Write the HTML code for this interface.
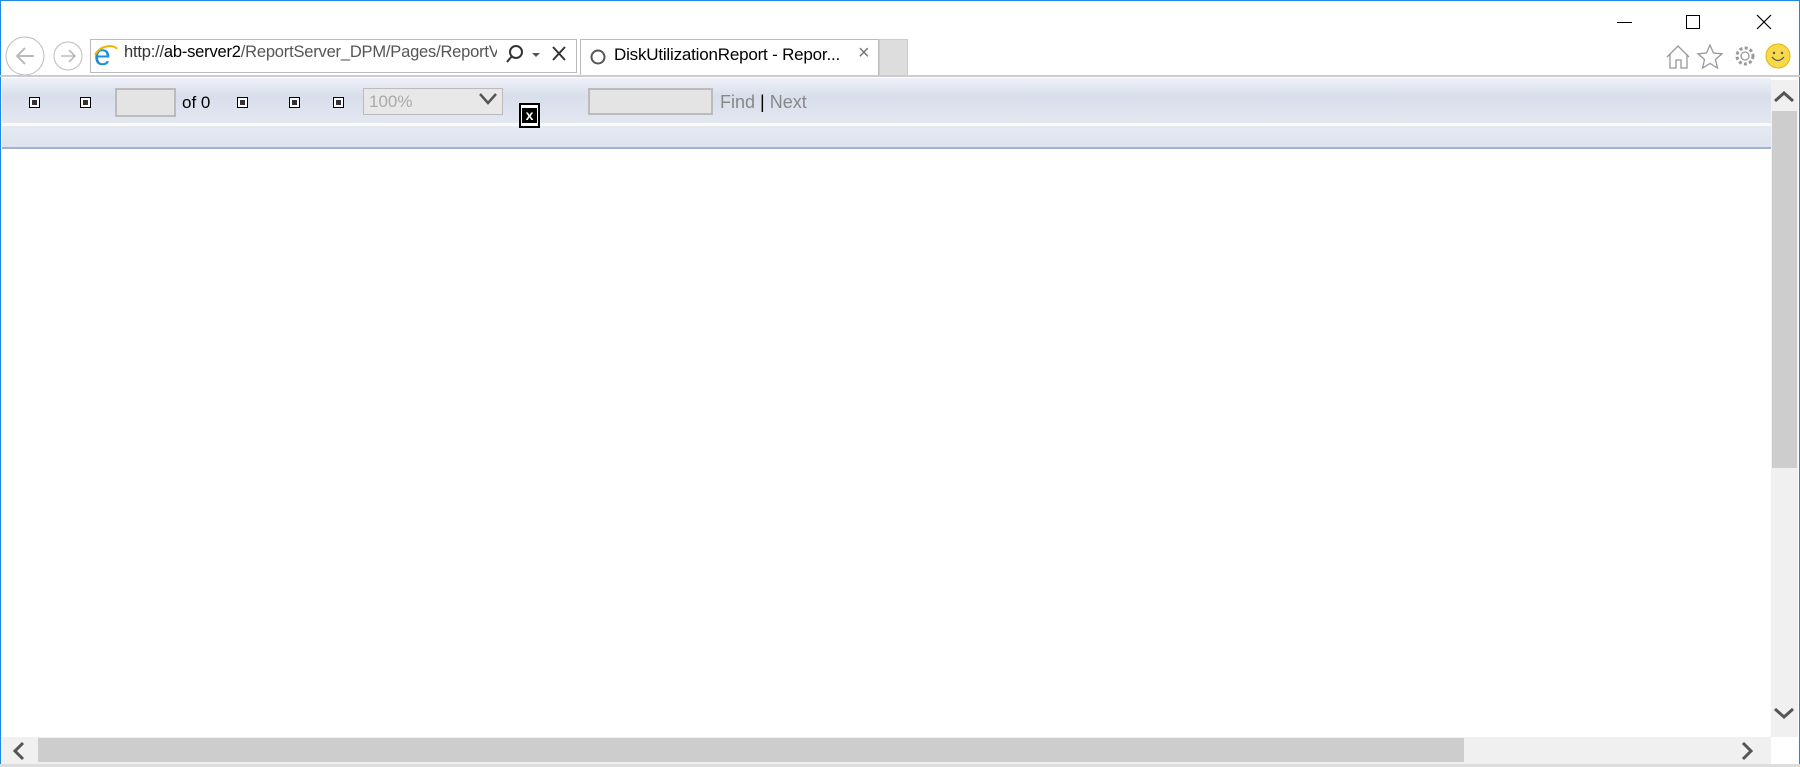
<!DOCTYPE html>
<html><head><meta charset="utf-8"><style>
*{margin:0;padding:0;box-sizing:border-box}
body{width:1800px;height:767px;overflow:hidden;background:#fff;font-family:"Segoe UI","Liberation Sans",sans-serif;position:relative}
.a{position:absolute}
.ic{position:absolute;width:11px;height:11px;border:1px solid #000;background:#fff;top:97px}
.ic:after{content:"";position:absolute;left:2px;top:2px;width:5px;height:5px;background:#333}
</style></head><body>
<div class="a" style="left:0;top:0;width:1800px;height:1px;background:#1e88e5"></div>
<div class="a" style="left:0;top:0;width:1px;height:767px;background:#1e88e5"></div>
<div class="a" style="right:0;top:0;width:1px;height:767px;background:#1e88e5"></div>
<div class="a" style="left:1617px;top:22px;width:15px;height:1px;background:#000"></div>
<div class="a" style="left:1686px;top:15px;width:14px;height:14px;border:1px solid #000"></div>
<svg class="a" style="left:1756px;top:14px" width="16" height="16"><path d="M1 1L15 15M15 1L1 15" stroke="#000" stroke-width="1.2"/></svg>
<svg class="a" style="left:3px;top:36px" width="84" height="40">
<circle cx="22" cy="20" r="19" fill="#fff" stroke="#bbb"/>
<path d="M31 20H14M22 12l-8 8 8 8" fill="none" stroke="#bbb" stroke-width="2"/>
<circle cx="65" cy="20" r="14" fill="#fff" stroke="#bbb"/>
<path d="M58 20h13M66 14l6 6-6 6" fill="none" stroke="#bbb" stroke-width="1.6"/>
</svg>
<div class="a" style="left:90px;top:39px;width:487px;height:34px;border:1px solid #bbb"></div>
<svg class="a" style="left:94px;top:43px" width="24" height="26"><text x="0" y="22" font-size="30" font-family="Liberation Sans" fill="#1a8fd8">e</text><path d="M1 12C6 2 20 1 23 6" fill="none" stroke="#f5b400" stroke-width="2"/></svg>
<div class="a" style="left:124px;top:43px;font-size:16.5px;letter-spacing:-0.2px;color:#333;white-space:nowrap;width:373px;overflow:hidden">http://<span style="color:#000">ab-server2</span><span style="color:#555">/ReportServer_DPM/Pages/ReportViewer</span></div>
<svg class="a" style="left:503px;top:44px" width="70" height="22"><circle cx="13" cy="8" r="6" fill="none" stroke="#333" stroke-width="2"/><path d="M9 12L4 18" stroke="#333" stroke-width="2"/><path d="M29 9h8l-4 4z" fill="#555"/><path d="M50 3l12 13M62 3L50 16" stroke="#333" stroke-width="2"/></svg>
<div class="a" style="left:580px;top:39px;width:299px;height:37px;border:1px solid #bbb;border-bottom:none;background:#fff"></div>
<div class="a" style="left:879px;top:39px;width:29px;height:37px;background:#ddd;border:1px solid #ccc"></div>
<svg class="a" style="left:589px;top:48px" width="18" height="18"><circle cx="9" cy="9" r="6.5" fill="none" stroke="#555" stroke-width="2"/></svg>
<div class="a" style="left:614px;top:45px;font-size:17px;letter-spacing:-0.2px;color:#000;white-space:nowrap">DiskUtilizationReport - Repor...</div>
<div class="a" style="left:858px;top:42px;font-size:20px;color:#777">×</div>
<svg class="a" style="left:1664px;top:43px" width="130" height="28">
<path d="M3 14L14 3 25 14M6 11v14h6v-8h5v8h6V11" fill="none" stroke="#999" stroke-width="1.3"/>
<path d="M46 2l3.5 8 8.5.8-6.5 5.7 2 8.5-7.5-4.5-7.5 4.5 2-8.5-6.5-5.7 8.5-.8z" fill="none" stroke="#999" stroke-width="1.3"/>
<circle cx="81" cy="13" r="8" fill="none" stroke="#999" stroke-width="3" stroke-dasharray="3 2.3"/><circle cx="81" cy="13" r="4" fill="none" stroke="#999" stroke-width="1.3"/>
<circle cx="114" cy="13" r="12" fill="#f8d94b" stroke="#e0b800"/><path d="M108 14q6 7 12 0" fill="none" stroke="#555" stroke-width="1.3"/><circle cx="110" cy="10" r="1.2" fill="#555"/><circle cx="118" cy="10" r="1.2" fill="#555"/>
</svg>
<div class="a" style="left:0;top:75px;width:1800px;height:2px;background:#ccc"></div>
<div class="a" style="left:2px;top:78px;width:1769px;height:46px;background:linear-gradient(#eef1f7,#d8deeb 40%,#e3e8f2)"></div>
<div class="a" style="left:2px;top:123px;width:1769px;height:3px;background:#fbfbf2"></div>
<div class="a" style="left:2px;top:126px;width:1769px;height:22px;background:linear-gradient(#e5e9f3,#dde3ef)"></div>
<div class="a" style="left:2px;top:147px;width:1769px;height:2px;background:#9fb3d6"></div>
<div class="ic" style="left:29px"></div><div class="ic" style="left:80px"></div>
<div class="a" style="left:115px;top:88px;width:61px;height:29px;border:2px solid #bbb;background:#e4e4e4"></div>
<div class="a" style="left:182px;top:93px;font-size:17px;color:#000">of 0</div>
<div class="ic" style="left:237px"></div><div class="ic" style="left:289px"></div><div class="ic" style="left:333px"></div>
<div class="a" style="left:363px;top:88px;width:140px;height:27px;border:1px solid #bbb;background:#e8e8e8"></div>
<div class="a" style="left:369px;top:92px;font-size:17px;color:#aaa">100%</div>
<svg class="a" style="left:478px;top:92px" width="20" height="14"><path d="M2 2l8 9 8-9" fill="none" stroke="#555" stroke-width="2.5"/></svg>
<div class="a" style="left:519px;top:103px;width:21px;height:25px;border:2px solid #000;background:#fff"><div style="margin:3px 1px;width:15px;height:15px;background:#000;color:#fff;font:bold 14px/15px 'Liberation Sans';text-align:center">x</div></div>
<div class="a" style="left:588px;top:88px;width:125px;height:27px;border:2px solid #bbb;background:#e4e4e4"></div>
<div class="a" style="left:720px;top:92px;font-size:18px;color:#888">Find <span style="color:#000">|</span> Next</div>
<div class="a" style="left:1771px;top:80px;width:27px;height:657px;background:#f0f0f0"></div>
<svg class="a" style="left:1773px;top:90px" width="22" height="14"><path d="M2 11l9-8 9 8" fill="none" stroke="#555" stroke-width="3"/></svg>
<div class="a" style="left:1772px;top:111px;width:25px;height:357px;background:#cdcdcd"></div>
<svg class="a" style="left:1773px;top:706px" width="22" height="14"><path d="M2 3l9 8 9-8" fill="none" stroke="#555" stroke-width="3"/></svg>
<div class="a" style="left:1px;top:737px;width:1770px;height:27px;background:#f0f0f0"></div>
<div class="a" style="left:38px;top:738px;width:1426px;height:24px;background:#cdcdcd"></div>
<svg class="a" style="left:12px;top:741px" width="14" height="20"><path d="M11 2l-8 8 8 8" fill="none" stroke="#555" stroke-width="3"/></svg>
<svg class="a" style="left:1740px;top:741px" width="14" height="20"><path d="M3 2l8 8-8 8" fill="none" stroke="#555" stroke-width="3"/></svg>
<div class="a" style="left:0;top:764px;width:1800px;height:3px;background:#ddd"></div>
</body></html>
